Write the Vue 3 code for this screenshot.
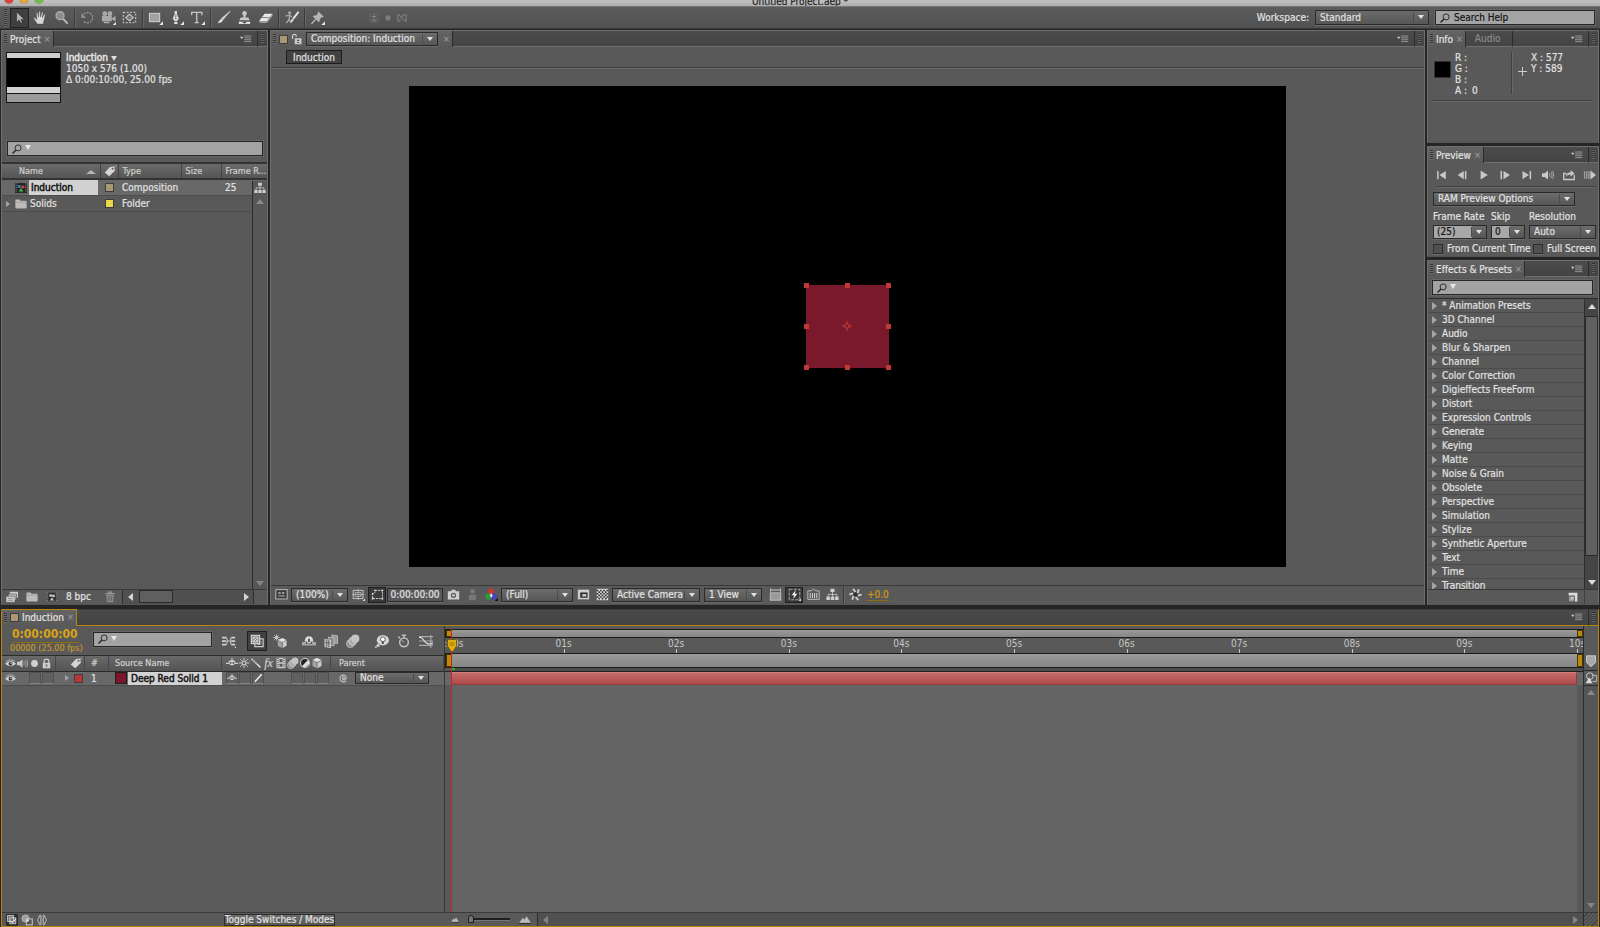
<script setup>
import { h, ref } from 'vue'

const G = '#c9c9c9'
const art = {
  arrow: `<path d="M5 2v11l2.600-2.400L9.300 14l1.700-.8-1.500-3.200H13z" fill="#b5b5b5" stroke="#222" stroke-width=".5"/>`,
  hand: `<path d="M4.600 15 1 9.200c-.5-1.200.8-1.600 1.500-.8l1.700 1.700L3.500 3.600c0-1.200 1.400-1.200 1.600-.1l.8 4 .2-5.400c.1-1.200 1.600-1.200 1.700 0l.2 5.300 1.300-4.700c.4-1.100 1.700-.7 1.500.4l-.8 5 1.700-3.200c.6-.9 1.700-.4 1.400.6L11.500 12 11 15z" fill="#d8d8d8" stroke="#333" stroke-width=".4"/>`,
  zoom: `<circle cx="6.500" cy="6" r="4.200" fill="#8d8d8d" stroke="#aaa" stroke-width="1.500"/><path d="m9.800 9.500 4.700 5" stroke="#bdbdbd" stroke-width="2"/>`,
  rotate: `<path d="M4 4.500A5.500 5.500 0 1 1 4 12" fill="none" stroke="#999" stroke-width="1.300" stroke-dasharray="2.200 1.100"/><path d="M1.500 3.500v4.800h4.800z" fill="#999"/>`,
  camera: `<circle cx="4" cy="4" r="2.600" fill="#aaa"/><circle cx="9.500" cy="4" r="2.600" fill="#aaa"/><path d="M1 6.500h10.500v5.500H1zM12 8.500l3.500-2v5.500L12 10.500zM3 12.500h6V14H3z" fill="#aaa"/><path d="M16 12.500V16h-3.500z" fill="#e0e0e0"/>`,
  panbehind: `<rect x="1.500" y="2.500" width="13" height="11" fill="none" stroke="#bbb" stroke-width="1.400" stroke-dasharray="2 1.600"/><circle cx="8" cy="8" r="3" fill="#777" stroke="#ccc"/><path d="m8 3.500 1.500 2h-3zM8 12.500l1.500-2h-3zM3 8l2-1.500v3zM13 8l-2-1.500v3z" fill="#ccc"/>`,
  rect: `<rect x="1.500" y="3.500" width="11" height="9" fill="#a2a2a2" stroke="#d5d5d5"/><path d="M16 12v4h-4z" fill="#e6e6e6"/>`,
  pen: `<path d="M6 1h2.500v3.500L10.500 9 8.500 12H6L4 9l2-4.500zM5.500 12.800h3.500V15H5.500z" fill="#ddd"/><path d="M7.250 5v5" stroke="#555" stroke-width=".8"/><path d="M16 12v4h-4z" fill="#e6e6e6"/>`,
  type: `<path d="M1.800 5.500v-3h10.900v3M7.200 2.500v11M5 13.500h4.500" fill="none" stroke="#c4c4c4" stroke-width="1.400"/><path d="M16 12v4h-4z" fill="#e6e6e6"/>`,
  brush: `<path d="M14.800 1.500 7.500 10.300 6 9z" fill="#e5e5e5" stroke="#ccc"/><path d="M5.700 9.200 7.500 11c-.8 2.300-3.500 3-6 3 1.700-1 1.700-4 4.200-4.800z" fill="#ddd"/>`,
  stamp: `<path d="M8 1a2.600 2.600 0 0 1 1.300 4.800L9 8h-2l-.3-2.200A2.600 2.600 0 0 1 8 1zM4 8h8l1.500 3h-11z" fill="#c8c8c8"/><path d="M2 12.500h12v2.300H2z" fill="#eee"/><path d="M5 12.500h6l-3 2z" fill="#444"/>`,
  eraser: `<path d="M7 4h8.500l-6 8H1z" fill="#e8e8e8"/><path d="M1 12h8.500v1.700H2.500zM9.500 12l6-8v2l-6 7.700z" fill="#aaa"/><path d="m4.300 8 8.500.2" stroke="#777"/>`,
  roto: `<circle cx="6" cy="3" r="1.700" fill="#aaa"/><path d="M1.500 6.500 6 5.500l2.500 2M6 5.500 5.500 10 2.500 14M5.500 10l2.500 4" fill="none" stroke="#aaa" stroke-width="1.500"/><path d="m15.500 2-5.800 7.500" stroke="#e5e5e5" stroke-width="2"/><path d="m8.800 9 1.600 1.300C9.500 12.200 8 13 6.500 13c1.200-.8 1-3 2.300-4z" fill="#ddd"/>`,
  pin: `<path d="M9 1.500 14.500 7l-1.200 1-1-.3-2 2.300c.3 1.300 0 2.200-.8 3L3 6.800c.8-.8 1.800-1 3-.7l2.300-2-.3-1.300z" fill="#b5b5b5"/><path d="m6 10-4.500 4.800" stroke="#c8c8c8" stroke-width="1.300"/><path d="M16 12v4h-4z" fill="#e6e6e6"/>`,
  axis1: `<rect x="2.500" y="2.500" width="11" height="11" fill="none" stroke="#777" stroke-dasharray="1.500 1"/><path d="M8 3.500v9M5 6h6M4.500 9c0 4 7 4 7 0" fill="none" stroke="#858585" stroke-width="1.300"/>`,
  dot: `<circle cx="8" cy="8" r="3.600" fill="#7c7c7c"/>`,
  axis3: `<path d="M2.500 3v9h3M3 3l10 10M10 4l-4 4M3 13l3-3M8.500 4h5v9" fill="none" stroke="#808080" stroke-width="1.400"/>`,
  search: `<circle cx="9.500" cy="6.500" r="4" fill="none" stroke="#2b2b2b" stroke-width="1.300"/><path d="M6.500 9.500 2 14" stroke="#2b2b2b" stroke-width="1.900"/>`,
  menu: `<path d="M0 5h4.600L2.300 8z" fill="#ccc"/><path d="M5.500 4H15M5.500 6.500H15M5.500 9H15M5.500 11.500H15" stroke="#9c9c9c" stroke-width="1.200"/>`,
  lock: `<path d="M2 8V4.200C2 1 7 1 7 4.200V5" fill="none" stroke="#ccc" stroke-width="1.600"/><rect x="5" y="7" width="9" height="8" fill="#ccc"/><path d="M8 9h3v1.500h-3zM8 12h3v1.200h-3z" fill="#555"/>`,
  tag: `<path d="m1 10 7-7.500L13.500 2l1 5.500L7 15z" fill="#d6d6d6"/><circle cx="11.500" cy="5" r="1.300" fill="#444"/><path d="m11.500 5 4.500-4" stroke="#ccc"/>`,
  comp: `<rect x="0" y="1.500" width="16" height="13" fill="#222"/><path d="M1.500 2v12M14.500 2v12" stroke="#aaa" stroke-width="1.200" stroke-dasharray="1.200 1.200"/><path d="M3.500 4h4v4h-4z" fill="#2b7fb5"/><circle cx="10.500" cy="6.500" r="2.300" fill="#d23a2a"/><path d="m8 8 3.500 4.800H4.500z" fill="#37b24a"/>`,
  folder: `<path d="M.5 3q0-1 1-1H6l1.500 1.500h7q1 0 1 1V13q0 1-1 1h-13q-1 0-1-1z" fill="#bbb"/><path d="M.5 5.500h15" stroke="#8a8a8a" stroke-width=".7"/>`,
  tree: `<path d="M5.500 1h5v4h-5zM.5 10.500h4.300v4.300H.5zM5.900 10.500h4.300v4.300H5.900zM11.200 10.500h4.300v4.300h-4.300z" fill="#d0d0d0"/><path d="M8 5v5.500M2.700 10.500V7.800h10.600v2.700" fill="none" stroke="#d0d0d0"/>`,
  footage: `<path d="M5 1h11v8H5z" fill="#ccc"/><path d="M3 4h11v8H3z" fill="#bbb" stroke="#444" stroke-width=".7"/><path d="M0 7h12v8H0z" fill="#ddd" stroke="#444" stroke-width=".7"/><path d="M2 9.700h8M2 12.300h8" stroke="#777" stroke-width="1.200"/>`,
  newcomp: `<rect x=".5" y="1.500" width="15" height="13" fill="#2c2c2c" stroke="#888" stroke-width=".6"/><path d="M2.300 2.500v11M13.700 2.500v11" stroke="#bbb" stroke-width="1.200" stroke-dasharray="1.200 1.200"/><path d="M4.500 4.500h3.500v3H4.500z" fill="#ccc"/><circle cx="10" cy="6.500" r="1.900" fill="#ccc"/><path d="m8 8.500 2.800 4H5z" fill="#ccc"/>`,
  trash: `<path d="M2 3.500h12M6 3V1.500h4V3" fill="none" stroke="#999" stroke-width="1.400"/><path d="M3 5h10l-.8 10H3.800z" fill="#8e8e8e"/><path d="M5.700 6.500v7M8 6.500v7M10.300 6.500v7" stroke="#555"/>`,
  monitor: `<rect x="1" y="2" width="14" height="11.500" fill="#3c3c3c" stroke="#bbb" stroke-width="1.200"/><path d="M4 5h3v2.500H4zM8.500 5h3v2.500h-3zM4 9h8v1.500H4z" fill="#999"/>`,
  grid: `<rect x="1.500" y="3" width="12" height="10" fill="none" stroke="#bbb" stroke-width="1.300"/><path d="M7.500 1v14M0 8h15M4 5.500h7v5H4z" fill="none" stroke="#bbb"/><path d="M16 13v3h-3z" fill="#ddd"/>`,
  mask: `<path d="M5 3h9v10H2V7c2 0 3-1 3-4z" fill="none" stroke="#ccc" stroke-width="1.200" stroke-dasharray="2.500 1"/><path d="M4 2h2v2H4zM13 2h2v2h-2zM13 12h2v2h-2zM1 12h2v2H1zM1 6h2v2H1z" fill="#ddd"/>`,
  photo: `<path d="M1 4h4l1-2h4l1 2h4v10H1z" fill="#d0d0d0"/><circle cx="8" cy="9" r="3.200" fill="#555"/><circle cx="8" cy="9" r="1.700" fill="#ccc"/>`,
  person: `<circle cx="8" cy="4" r="2.900" fill="#777"/><path d="M3.500 15V9.500q0-1.500 2-1.500h5q2 0 2 1.500V15z" fill="#777"/>`,
  rgb: `<circle cx="7.500" cy="4.700" r="4" fill="#c9342d"/><circle cx="4.500" cy="10.500" r="4" fill="#2f9a3c"/><circle cx="10.700" cy="10.500" r="4" fill="#4a45b8"/><path d="M7.600 6 9.300 9.500l-1.700 2.500-1.600-2.500z" fill="#eee"/><path d="M16 12v4h-4z" fill="#111"/>`,
  roi: `<rect x="1" y="2" width="14" height="12" fill="#ccc"/><rect x="4" y="5.500" width="9" height="6.500" fill="#2c2c2c"/><rect x="6.500" y="7.500" width="5" height="3" fill="#ccc"/>`,
  checker: `<rect x="1" y="1" width="14" height="14" fill="#ddd"/><path d="M1 3h14M1 7h14M1 11h14" stroke="#333" stroke-width="2" stroke-dasharray="2 2"/><path d="M3 5h12M3 9h12M3 13h12" stroke="#333" stroke-width="2" stroke-dasharray="2 2"/>`,
  ratio: `<path d="M2 .5v4M14 .5v4M2 2.500h12" stroke="#ccc" stroke-width="1.200"/><rect x="1.500" y="6" width="13" height="9" fill="#999" stroke="#ccc"/>`,
  fast: `<rect x="1.500" y="1.500" width="13" height="13" fill="none" stroke="#bbb" stroke-dasharray="4 1.500"/><path d="M9.500 2.500 4.500 9h3L6.500 13.500l5-6.500h-3z" fill="#eee"/><path d="M16 13v3h-3z" fill="#ddd"/>`,
  timeline: `<path d="M1 14V3.500h4.500L8 1l2.500 2.500H15V14z" fill="none" stroke="#bbb" stroke-width="1.200"/><path d="M4 6v6.500M6.700 6v6.500M9.300 6v6.500M12 6v6.500" stroke="#ccc" stroke-width="1.300"/>`,
  aperture: `<circle cx="8" cy="8" r="3" fill="#333"/><path d="M8 5 5 1M10.500 6.500 12 1.500M11 9.500l4.500-1.500M8 11l3.500 4M5.500 9.500 4 14.500M5 6.500.5 8" stroke="#ccc" stroke-width="2.300"/>`,
  first: `<path d="M1.500 2.500h2v11h-2zM13 2.500v11L4.500 8z" fill="${G}"/>`,
  back: `<path d="M9 2.500v11L1 8zM10.500 2.500h2v11h-2z" fill="${G}"/>`,
  play: `<path d="M3.500 2v12L13 8z" fill="${G}"/>`,
  fwd: `<path d="M2 2.500h2v11H2zM6 2.500v11L14.500 8z" fill="${G}"/>`,
  last: `<path d="M2 2.500v11L10.500 8zM11.500 2.500h2v11h-2z" fill="${G}"/>`,
  speaker: `<path d="M0 5.500h3.500L8 2v12l-4.500-3.500H0z" fill="${G}"/><path d="M9.800 5.500q1.600 2.500 0 5M12 3.500q3 4.500 0 9M14.200 2.500q3 5.500 0 11" fill="none" stroke="#aaa" stroke-width="1.200"/>`,
  loop: `<path d="M4.500 6H1v8h14V8" fill="none" stroke="${G}" stroke-width="1.800"/><path d="M4 10q0-5.500 6-5.500V1.500L15.500 6 10 10V7.300q-4 0-6 2.700z" fill="${G}"/>`,
  ram: `<path d="M.8 3v10M3.700 3v10M6.600 3v10" stroke="#9c9c9c" stroke-width="1.900"/><path d="M8.500 2v12L16 8z" fill="${G}"/>`,
  newitem: `<path d="M1 1h14v14h-4V5.500H1z" fill="#ddd"/><path d="M1.500 7h8v8h-8z" fill="#999"/><path d="M5 9h3v3M8 9l-4 4" stroke="#eee" fill="none"/>`,
  eye: `<path d="M0 8.500q8-8 16 0-8 7-16 0z" fill="#d6d6d6"/><circle cx="8" cy="8.300" r="2.800" fill="#3b3b3b"/><circle cx="8.800" cy="7.500" r=".9" fill="#eee"/><path d="M1.500 5Q8 .3 14.500 5" fill="none" stroke="#bbb" stroke-width="1.200"/>`,
  solo: `<circle cx="8" cy="8" r="5" fill="#d0d0d0"/>`,
  padlock: `<path d="M4.500 8V5q0-3.300 3.500-3.300T11.500 5v3" fill="none" stroke="#ccc" stroke-width="1.800"/><rect x="2.500" y="7" width="11" height="8" fill="#ccc"/><path d="M7 9.500h2v3H7z" fill="#555"/>`,
  shy: `<path d="M0 8.500h4M12 8.500h4M8 1.500V4" stroke="#ccc" stroke-width="1.700"/><path d="M3.500 8q0-4 4.500-4t4.500 4l-2.500 3H6z" fill="#d0d0d0"/><circle cx="6.200" cy="7.800" r="1.200" fill="#3c3c3c"/><circle cx="9.800" cy="7.800" r="1.200" fill="#3c3c3c"/>`,
  sun: `<circle cx="8" cy="8" r="2.600" fill="none" stroke="#ccc" stroke-width="1.700"/><path d="M8 1v3M8 12v3M1 8h3M12 8h3M3 3l2 2M11 11l2 2M13 3l-2 2M5 11l-2 2" stroke="#ccc" stroke-width="1.300"/>`,
  quality: `<path d="M2 2.500 9 9" stroke="#ccc" stroke-width="2.200" stroke-dasharray="2.400 1"/><path d="m9 9 5 5" stroke="#eee" stroke-width="1.600"/>`,
  slash: `<path d="M3 14 14 2" stroke="#eee" stroke-width="2.500"/>`,
  film: `<rect x="2" y="1" width="12" height="14" fill="#ccc"/><path d="M4 1v14M12 1v14" stroke="#444" stroke-width="1.400" stroke-dasharray="1.500 1.300"/><path d="M6 3h4v4H6zM6 9h4v4H6z" fill="#555"/>`,
  blur: `<circle cx="5" cy="11" r="4.500" fill="#909090" stroke="#ccc" stroke-width=".8"/><circle cx="7.600" cy="8.300" r="4.500" fill="#aaa" stroke="#ddd" stroke-width=".8"/><circle cx="10.600" cy="5.300" r="4.700" fill="#c4c4c4"/>`,
  adjust: `<circle cx="8" cy="8" r="6" fill="#222" stroke="#ccc" stroke-width="1.500"/><path d="M12.200 3.800a6 6 0 0 1-8.400 8.400z" fill="#ddd"/>`,
  cube: `<path d="m8 1 6 3-6 3-6-3z" fill="#e0e0e0"/><path d="m2 5 5.500 2.800V15L2 12z" fill="#a5a5a5"/><path d="m14 5-5.500 2.800V15l5.500-3z" fill="#c8c8c8"/>`,
  pickwhip: `<path d="M8.500 8.500a1.300 1.300 0 1 0-1.600-1.800c-1 2.300 1.600 4 3.500 3 2.800-1.700 1.800-5.700-1.500-6.500C4.500 2.500 2 6 3.200 9.500c1.200 3.200 5 4.500 8.300 3" fill="none" stroke="#ccc" stroke-width="1.500"/>`,
  flow: `<path d="M0 4h5M0 8h5M0 12h5M10.500 4H15M10.500 8H15M10.500 12H15" stroke="#d0d0d0" stroke-width="2"/><path d="M5 4l1.500 4L5 12M10.500 4 9.300 8l1.200 4M6.500 8h3" fill="none" stroke="#bbb" stroke-width="1.200"/><path d="M16 14v2h-2z" fill="#ddd"/>`,
  live: `<rect x="1.500" y="1.500" width="9.500" height="9.500" fill="#777" stroke="#ddd" stroke-width="1.200"/><path d="M3.500 3.500h5.500V9H3.500zM3.500 3.500 9 9M9 3.500 3.500 9" fill="none" stroke="#e5e5e5"/><path d="M5.500 11v3.500h9.500V5.500H11" fill="none" stroke="#ccc" stroke-width="1.400"/><path d="M8 11v1h4.500V8H11" fill="none" stroke="#aaa"/>`,
  draft: `<path d="M4 .5v7M.5 4h7M1.500 1.500l5 5M6.500 1.500l-5 5" stroke="#ccc"/><path d="m10.500 4.500 5 2.300-5 2.500-5-2.500z" fill="#e0e0e0"/><path d="m5.500 7.500 4.500 2.300V16l-4.500-2.500z" fill="#a5a5a5"/><path d="m15.500 7.500-4.500 2.300V16l4.500-2.500z" fill="#ccc"/>`,
  hideshy: `<path d="M0 9h4.500v4H0zM11.500 9H16v4h-4.500zM4.500 11.500h7V13h-7z" fill="#a8a8a8"/><path d="M3 8.500Q3.500 2.500 8 2.500t5 6H10v2H6v-2z" fill="#ddd"/><path d="M7 5.500h2V9H7z" fill="#444"/>`,
  frames: `<path d="M9 1 15.500 2v9L9 10z" fill="#999" stroke="#ccc" stroke-width=".8"/><path d="m5 3.500 6.500 1v9L5 12.500z" fill="#888" stroke="#ccc" stroke-width=".8"/><path d="M1 6l6.500 1v8.500L1 14.500z" fill="#aaa" stroke="#ddd" stroke-width=".8"/><path d="M3 6v9M5.200 6v9M1 10h6.500" stroke="#555" stroke-width=".7"/>`,
  bulb: `<ellipse cx="9" cy="7" rx="7" ry="6" fill="#d5d5d5"/><circle cx="3.500" cy="13" r="1.900" fill="#ccc"/><circle cx="1" cy="15" r="1" fill="#ccc"/><circle cx="9" cy="6" r="2.700" fill="#fff" stroke="#444"/><path d="M8 9h2v2.500H8z" fill="#444"/>`,
  watch: `<circle cx="8" cy="9.500" r="5" fill="none" stroke="#bdbdbd" stroke-width="1.800"/><path d="M8 4.500V1.500M5.500 1.500h5M3.500 4.800 1.500 3" stroke="#bdbdbd" stroke-width="1.600"/><path d="M8 9.500 5.500 7" stroke="#ccc"/>`,
  graph: `<path d="M0 3h16M0 8h16M0 13h16M13.500 1v15" stroke="#aaa" stroke-width="1.200"/><path d="M0 4q3-1 5 2.500T10 11t6-1" fill="none" stroke="#ddd" stroke-width="1.400"/>`,
  layers: `<rect x="0" y="0" width="16" height="16" fill="#2e2e2e"/><path d="M2 2h8v8H2zM5 5h8v8H5z" fill="#777" stroke="#ddd"/><path d="m6.500 9 2 2.500 5-5" fill="none" stroke="#eee" stroke-width="1.300"/>`,
  modes: `<circle cx="6" cy="6" r="4.700" fill="#999" stroke="#ccc"/><rect x="7" y="6.500" width="8" height="8" fill="#555" stroke="#ccc" stroke-width="1.300"/><path d="M7 10.500V7h4q0 3.500-4 3.500z" fill="#ddd"/>`,
  braces: `<path d="M6.500 1.500Q4 1.500 4 4t-2.500 4Q4 9.500 4 12t2.500 2.500M9.500 1.500q2.500 0 2.500 2.500t2.500 4q-2.500 1.500-2.500 4t-2.500 2.500M6.500 2v12M9.500 2v12" fill="none" stroke="#c5c5c5" stroke-width="1.300"/>`,
  hill: `<path d="M0 12 5 5l2 2.500L10 3l6 9z" fill="#bbb"/><path d="M0 12.500h16" stroke="#222" stroke-width="1.200"/>`,
  marker: `<path d="M2 1h12v9l-6 5.500L2 10z" fill="#a8a8a8" stroke="#ddd"/>`,
  button3: `<circle cx="6.500" cy="5.500" r="4.500" fill="none" stroke="#ccc" stroke-width="1.300"/><path d="M9 4.500h6.500v8H10" fill="none" stroke="#bbb" stroke-width="1.300"/><path d="m1 15 4.500-8 4.500 8z" fill="#d8d8d8"/>`,
  anchor: `<circle cx="8" cy="8" r="3.500" fill="none" stroke="#c23b35" stroke-width="1.700"/><path d="M8 0v4.500M8 11.500V16M0 8h4.500M11.500 8H16" stroke="#c23b35" stroke-width="1.600"/>`,
}
const Icon = (props) =>
  h('svg', { class: 'ic', viewBox: '0 0 16 16', 'aria-hidden': 'true', innerHTML: art[props.name] })
Icon.props = ['name']

const toolGroups = [
  ['arrow', 'hand', 'zoom'],
  ['rotate', 'camera', 'panbehind'],
  ['rect', 'pen', 'type'],
  ['brush', 'stamp', 'eraser'],
  ['roto'],
  ['pin'],
]
const axes = ['axis1', 'dot', 'axis3']
const transport = ['first', 'back', 'play', 'fwd', 'last', 'speaker', 'loop', 'ram']
const effects = [
  '* Animation Presets', '3D Channel', 'Audio', 'Blur & Sharpen', 'Channel', 'Color Correction',
  'Digieffects FreeForm', 'Distort', 'Expression Controls', 'Generate', 'Keying', 'Matte',
  'Noise & Grain', 'Obsolete', 'Perspective', 'Simulation', 'Stylize', 'Synthetic Aperture',
  'Text', 'Time', 'Transition',
]
const ticks = ['0:00s', '01s', '02s', '03s', '04s', '05s', '06s', '07s', '08s', '09s', '10s']
const handles = ['nw', 'n', 'ne', 'w', 'e', 'sw', 's', 'se']
const fromCurrent = ref(false)
const fullScreen = ref(false)
const zoomLevel = ref(0)
</script>

<template>
  <div class="app">
    <header class="titlebar">
      <i class="light red"></i><i class="light amber"></i><i class="light green"></i>
      <h1>Untitled Project.aep *</h1>
    </header>

    <nav class="toolbar" aria-label="Tools">
      <span class="grip"></span>
      <template v-for="(group, g) in toolGroups" :key="g">
        <span v-if="g" class="tsep"></span>
        <button v-for="t in group" :key="t" class="tool" :class="{ on: t === 'arrow' }" :aria-label="t"><Icon :name="t" /></button>
      </template>
      <span class="axes"><Icon v-for="a in axes" :key="a" :name="a" /></span>
      <label class="wslabel" for="workspace">Workspace:</label>
      <span class="sel ws"><select id="workspace"><option>Standard</option></select></span>
      <span class="field help"><Icon name="search" /><input type="text" value="Search Help" aria-label="Search Help" /></span>
    </nav>

    <main class="upper">
      <section class="panel project">
        <div class="tabs">
          <div class="tab"><span class="grip"></span>Project<b class="x">×</b></div>
          <div class="tabfill"></div>
          <button class="pmenu" aria-label="Panel menu"><Icon name="menu" /></button><span class="endgrip"></span>
        </div>
        <div class="summary">
          <div class="thumb"></div>
          <div class="meta"><strong>Induction <i class="dn"></i></strong><span>1050 x 576 (1.00)</span><span>Δ 0:00:10:00, 25.00 fps</span></div>
        </div>
        <div class="field psearch"><Icon name="search" /><i class="dn"></i><input type="text" aria-label="Search project" /></div>
        <div class="listing">
          <table>
            <colgroup><col class="c1" /><col class="c2" /><col class="c3" /><col class="c4" /><col /></colgroup>
            <thead><tr><th class="nm">Name<i class="up"></i></th><th class="ctr"><Icon name="tag" /></th><th>Type</th><th>Size</th><th>Frame R...</th></tr></thead>
            <tbody>
              <tr class="picked">
                <td><div class="item"><i class="tw"></i><Icon name="comp" /><strong>Induction</strong></div></td>
                <td class="ctr"><i class="sw tan"></i></td><td>Composition</td><td></td><td>25</td>
              </tr>
              <tr>
                <td><div class="item"><i class="tw rt"></i><Icon name="folder" /><span>Solids</span></div></td>
                <td class="ctr"><i class="sw yellow"></i></td><td>Folder</td><td></td><td></td>
              </tr>
            </tbody>
          </table>
          <div class="vscroll pv"><Icon name="tree" /><i class="up"></i><span class="grow"></span><i class="dn dim"></i></div>
        </div>
        <footer class="pfoot">
          <button aria-label="Interpret footage"><Icon name="footage" /></button>
          <button aria-label="New folder"><Icon name="folder" /></button>
          <button aria-label="New composition"><Icon name="newcomp" /></button>
          <button class="bpc">8 bpc</button>
          <button aria-label="Delete"><Icon name="trash" /></button>
          <div class="hscroll"><i class="lf"></i><span class="thumbx"></span><i class="rt2"></i></div>
          <span class="corner"></span>
        </footer>
      </section>

      <section class="panel compp">
        <div class="tabs">
          <div class="tab ctab">
            <span class="grip"></span><i class="sw tan"></i><Icon name="lock" />
            <span class="sel csel"><select aria-label="Composition"><option>Composition: Induction</option></select></span><b class="x">×</b>
          </div>
          <div class="tabfill"></div>
          <button class="pmenu" aria-label="Panel menu"><Icon name="menu" /></button><span class="endgrip"></span>
        </div>
        <div class="crumbs"><button>Induction</button></div>
        <div class="stage">
          <div class="frame">
            <div class="solid">
              <i v-for="p in handles" :key="p" class="hd" :class="'at-' + p"></i>
              <Icon name="anchor" />
            </div>
          </div>
        </div>
        <footer class="cfoot">
          <button class="b" aria-label="Always preview"><Icon name="monitor" /></button>
          <span class="sel s1"><select aria-label="Magnification"><option>(100%)</option></select></span>
          <button class="b" aria-label="Grid"><Icon name="grid" /></button>
          <button class="b on" aria-label="Mask"><Icon name="mask" /></button>
          <button class="tc">0:00:00:00</button>
          <button class="b" aria-label="Snapshot"><Icon name="photo" /></button>
          <button class="b" aria-label="Show snapshot"><Icon name="person" /></button>
          <button class="b" aria-label="Channels"><Icon name="rgb" /></button>
          <span class="sel s2"><select aria-label="Resolution"><option>(Full)</option></select></span>
          <button class="b" aria-label="Region of interest"><Icon name="roi" /></button>
          <button class="b" aria-label="Transparency grid"><Icon name="checker" /></button>
          <span class="sel s3"><select aria-label="Camera"><option>Active Camera</option></select></span>
          <span class="sel s4"><select aria-label="Views"><option>1 View</option></select></span>
          <button class="b" aria-label="Pixel aspect"><Icon name="ratio" /></button>
          <button class="b on" aria-label="Fast previews"><Icon name="fast" /></button>
          <button class="b" aria-label="Timeline"><Icon name="timeline" /></button>
          <button class="b" aria-label="Flowchart"><Icon name="tree" /></button>
          <span class="tsep thin"></span>
          <button class="b" aria-label="Reset exposure"><Icon name="aperture" /></button>
          <a href="#exposure" class="hot">+0.0</a>
        </footer>
      </section>

      <aside class="side">
        <section class="panel info">
          <div class="tabs">
            <div class="tab"><span class="grip"></span>Info<b class="x">×</b></div>
            <div class="tab off">Audio</div>
            <div class="tabfill"></div>
            <button class="pmenu" aria-label="Panel menu"><Icon name="menu" /></button><span class="endgrip"></span>
          </div>
          <div class="readout">
            <i class="black"></i>
            <dl><dt>R :</dt><dd></dd><dt>G :</dt><dd></dd><dt>B :</dt><dd></dd><dt>A :</dt><dd>0</dd></dl>
            <i class="vline"></i><i class="plus"></i>
            <div class="xy"><span>X : 577</span><span>Y : 589</span></div>
          </div>
        </section>

        <section class="panel preview">
          <div class="tabs">
            <div class="tab"><span class="grip"></span>Preview<b class="x">×</b></div>
            <div class="tabfill"></div>
            <button class="pmenu" aria-label="Panel menu"><Icon name="menu" /></button><span class="endgrip"></span>
          </div>
          <div class="transport"><button v-for="t in transport" :key="t" :aria-label="t"><Icon :name="t" /></button></div>
          <div class="opts">
            <span class="sel ram"><select aria-label="Preview options"><option>RAM Preview Options</option></select></span>
            <div class="trio">
              <label for="fr">Frame Rate</label><label for="sk">Skip</label><label for="rs">Resolution</label>
              <span class="sel edit"><select id="fr"><option>(25)</option></select></span>
              <span class="sel edit"><select id="sk"><option>0</option></select></span>
              <span class="sel"><select id="rs"><option>Auto</option></select></span>
            </div>
            <div class="checks">
              <label><input v-model="fromCurrent" type="checkbox" />From Current Time</label>
              <label><input v-model="fullScreen" type="checkbox" />Full Screen</label>
            </div>
          </div>
        </section>

        <section class="panel effects">
          <div class="tabs">
            <div class="tab"><span class="grip"></span>Effects &amp; Presets<b class="x">×</b></div>
            <div class="tabfill"></div>
            <button class="pmenu" aria-label="Panel menu"><Icon name="menu" /></button><span class="endgrip"></span>
          </div>
          <div class="field esearch"><Icon name="search" /><i class="dn"></i><input type="text" aria-label="Search effects" /></div>
          <div class="fxwrap">
            <ul><li v-for="e in effects" :key="e"><i class="rt"></i>{{ e }}</li></ul>
            <div class="vscroll ev"><i class="up lit"></i><span class="knob"></span><i class="dn"></i></div>
          </div>
          <footer class="efoot"><button aria-label="New preset"><Icon name="newitem" /></button><span></span></footer>
        </section>
      </aside>
    </main>

    <section class="timeline">
      <div class="tltabs">
        <div class="tltab"><span class="grip"></span><i class="sw tan"></i>Induction<b class="x">×</b></div>
        <div class="tlfill"></div>
        <button class="pmenu" aria-label="Panel menu"><Icon name="menu" /></button><span class="endgrip"></span>
      </div>
      <div class="tlbody">
        <div class="left">
          <div class="controls">
            <div class="time"><a href="#time">0:00:00:00</a><span>00000 (25.00 fps)</span></div>
            <div class="field tsearch"><Icon name="search" /><i class="dn"></i><input type="text" aria-label="Search layers" /></div>
            <div class="sws">
              <div class="trip">
                <button aria-label="Flowchart"><Icon name="flow" /></button>
                <button class="on" aria-label="Live update"><Icon name="live" /></button>
                <button aria-label="Draft 3D"><Icon name="draft" /></button>
              </div>
              <div class="trip">
                <button aria-label="Hide shy layers"><Icon name="hideshy" /></button>
                <button aria-label="Frame blending"><Icon name="frames" /></button>
                <button aria-label="Motion blur"><Icon name="blur" /></button>
              </div>
              <div class="trip">
                <button aria-label="Brainstorm"><Icon name="bulb" /></button>
                <button aria-label="Auto keyframe"><Icon name="watch" /></button>
                <button aria-label="Graph editor"><Icon name="graph" /></button>
              </div>
            </div>
          </div>
          <div class="cols lhead">
            <span class="av"><Icon name="eye" /><Icon name="speaker" /><Icon name="solo" /><Icon name="padlock" /></span>
            <span class="lab"><Icon name="tag" /></span><span class="num">#</span>
            <span class="src">Source Name</span>
            <span class="swi"><Icon name="shy" /><Icon name="sun" /><Icon name="quality" /><em>fx</em><Icon name="film" /><Icon name="blur" /><Icon name="adjust" /><Icon name="cube" /></span>
            <span class="par">Parent</span>
          </div>
          <div class="cols lrow">
            <span class="av"><Icon name="eye" /><i class="gap"></i><i class="box"></i><i class="box"></i></span>
            <span class="lab"><i class="rt"></i><i class="sw rose"></i></span><span class="num">1</span>
            <span class="src"><i class="sw wine"></i><strong>Deep Red Solid 1</strong></span>
            <span class="swi"><i class="box"><Icon name="shy" /></i><i class="box"></i><i class="box"><Icon name="slash" /></i><i class="gap"></i><i class="gap"></i><i class="box"></i><i class="box"></i><i class="box"></i></span>
            <span class="par"><Icon name="pickwhip" /><span class="sel psel"><select aria-label="Parent"><option>None</option></select></span></span>
          </div>
          <div class="lfill"></div>
        </div>

        <div class="right">
          <div class="navbar"><i></i><span></span><i></i></div>
          <div class="ruler">
            <div v-for="(t, i) in ticks" :key="t" class="tick" :style="{ left: i * 10 + '%' }"><span>{{ t }}</span></div>
          </div>
          <div class="workarea"><i></i><span></span><i></i></div>
          <div class="cache"><i></i></div>
          <div class="layerbar"><span></span></div>
          <div class="tracks"></div>
          <div class="playhead"><svg viewBox="0 0 10 14"><path d="M.5.5h9V7L6 12.500H4L.5 7z" fill="#e0ac12" stroke="#5c4700" stroke-width=".7" /><path d="M2.500 4h5M2.500 6h5" stroke="#8a6a00" stroke-width=".8" /></svg></div>
        </div>

        <div class="gutter">
          <div class="g1"><Icon name="marker" /></div>
          <div class="g2"><Icon name="button3" /></div>
          <div class="vscroll tv"><i class="up"></i><span class="grow"></span><i class="dn dim"></i></div>
        </div>
      </div>
      <footer class="tlfoot">
        <div class="fleft">
          <button aria-label="Layer switches"><Icon name="layers" /></button>
          <button aria-label="Transfer modes"><Icon name="modes" /></button>
          <button aria-label="In and out"><Icon name="braces" /></button>
          <button class="toggle">Toggle Switches / Modes</button>
        </div>
        <div class="zoomer"><Icon name="hill" class="small" /><input v-model="zoomLevel" type="range" aria-label="Zoom" /><Icon name="hill" /></div>
        <div class="tlh"><i class="lf"></i><span class="grow"></span><i class="rt2"></i></div>
        <span class="resize"></span>
      </footer>
    </section>
  </div>
</template>

<style>
html, body { margin: 0; height: 100%; background: #232323; }
#app { height: 100%; }
</style>

<style scoped>
.app { height: 100%; display: grid; grid-template-rows: 7px 22px minmax(0, 574fr) minmax(0, 318fr); background: #252525; color: #e2e2e2; font: 10px/11px "DejaVu Sans Condensed", "DejaVu Sans", sans-serif; -webkit-text-stroke: 0.2px currentColor; overflow: hidden; }
.app * { box-sizing: border-box; }
button, input, select { font: inherit; color: inherit; margin: 0; padding: 0; border: 0; background: none; border-radius: 0; outline: none; -webkit-text-stroke: inherit; }
button { display: flex; align-items: center; justify-content: center; }
input[type='text'] { flex: 1; min-width: 0; height: 100%; }
ul, dl, dd, h1 { margin: 0; padding: 0; list-style: none; }
.ic { width: 12px; height: 12px; flex: none; display: block; overflow: visible; }
.grow { flex: 1; }
strong { font-weight: 400; -webkit-text-stroke: 0.5px currentColor; }

/* title bar */
.titlebar { position: relative; background: linear-gradient(#c2c2c2, #adadad); border-bottom: 1px solid #777; overflow: hidden; }
.titlebar h1 { position: absolute; left: 0; right: 0; bottom: -1px; text-align: center; font-size: 10px; line-height: 11px; font-weight: 400; color: #222; }
.light { position: absolute; bottom: 2px; width: 10px; height: 12px; border-radius: 50%; border: 1px solid #8886; }
.red { left: 4px; background: #e23f3f; } .amber { left: 19px; background: #eda63a; } .green { left: 34px; background: #74bd4a; }

/* toolbar */
.toolbar { display: flex; align-items: center; background: linear-gradient(#5c5c5c, #515151); border-bottom: 1px solid #3a3a3a; padding-right: 5px; }
.grip { width: 3px; height: 10px; flex: none; background: repeating-linear-gradient(#353535 0 1px, #6c6c6c 1px 2px); }
.toolbar > .grip { margin: 0 2px 0 4px; height: 18px; }
.tool { width: 21px; height: 20px; }
.tool .ic { width: 15px; height: 15px; }
.tool.on { width: 19px; margin: 0 1px; background: #3f3f3f; border: 1px solid #222; }
.tsep { width: 5px; height: 18px; flex: none; background: linear-gradient(90deg, transparent 2px, #383838 2px 3px, #686868 3px 4px, transparent 4px); }
.axes { display: flex; gap: 2px; margin-left: 40px; }
.wslabel { margin-left: auto; margin-right: 6px; }

/* selects */
.sel { position: relative; display: inline-flex; height: 14px; flex: none; border: 1px solid #2a2a2a; background: linear-gradient(#6c6c6c, #565656); box-shadow: 0 1px 0 #6b6b6b; }
.sel select { width: 100%; height: 100%; appearance: none; padding: 0 14px 0 4px; line-height: 12px; }
.sel::before { content: ''; position: absolute; right: 14px; top: 1px; bottom: 1px; border-left: 1px solid #4b4b4b; }
.sel::after { content: ''; position: absolute; right: 4px; top: 4px; border: 3px solid transparent; border-top: 4px solid #e2e2e2; border-bottom: 0; pointer-events: none; }
.ws { width: 114px; height: 15px; margin-right: 6px; }
.sel option { color: #111; }

/* text fields */
.field { display: flex; align-items: center; height: 15px; padding: 0 3px; background: #a3a3a3; border: 1px solid #262626; box-shadow: 0 0 0 1px #656565; }
.field .dn { margin: -2px 4px 0 2px; border-top-color: #e8e8e8; }
.help { width: 160px; color: #151515; }
.help input { padding-left: 3px; }

/* arrows */
.dn, .up, .lf, .rt, .rt2 { display: inline-block; width: 0; height: 0; flex: none; border: 4px solid transparent; }
.dn { border: 3px solid transparent; border-top: 5px solid #dedede; border-bottom: 0; }
.up { border-bottom: 5px solid #8a8a8a; border-top: 0; }
.lf { border-right: 5px solid #d5d5d5; border-left: 0; }
.rt { border-left: 4px solid #a5a5a5; border-right: 0; border-top-width: 3px; border-bottom-width: 3px; }
.rt2 { border-left: 5px solid #d5d5d5; border-right: 0; }
.dim { border-width: 5px 4px 0; border-top-color: #858585; }

/* panels */
.upper { display: grid; grid-template-columns: 267px minmax(0, 1fr) 172px; gap: 2px; padding: 1px 1px 2px; min-height: 0; }
.panel { display: flex; flex-direction: column; min-width: 0; min-height: 0; background: #595959; border: 1px solid #6e6e6e; border-bottom-color: #555; overflow: hidden; }
.tabs { display: flex; flex: none; height: 16px; background: linear-gradient(#4b4b4b, #434343); }
.tab { display: flex; align-items: center; gap: 3px; padding: 0 2px; background: linear-gradient(#636363, #595959); border-right: 1px solid #2b2b2b; }
.tab.off { background: none; color: #8b8b8b; padding: 0 12px 0 9px; border-bottom: 1px solid #707070; }
.tabfill { flex: 1; border-bottom: 1px solid #707070; }
.x { font-weight: 400; font-size: 9px; color: #999; }
.pmenu { width: 22px; border-bottom: 1px solid #707070; }
.endgrip { width: 10px; border-left: 1px solid #2b2b2b; border-bottom: 1px solid #707070; background: repeating-linear-gradient(#333 0 1px, #666 1px 2px) 3px 2px / 3px 10px no-repeat; }
.sw { display: inline-block; width: 9px; height: 9px; flex: none; border: 1px solid #3d3d3d; }
.tan { background: #aa9875; } .yellow { background: #e8d94a; } .rose { background: #b83436; } .wine { background: #7a162c; }

.summary { display: flex; gap: 5px; padding: 5px 4px; height: 91px; flex: none; }
.thumb { width: 55px; height: 51px; flex: none; border: 1px solid #141414; background: linear-gradient(#cfcfcf 0 5px, #000 5px 34px, #d2d2d2 34px 40px, #141414 40px 41px, #9b9b9b 41px); }
.meta { display: flex; flex-direction: column; }
.psearch { margin: 3px 4px 6px 5px; flex: none; }
.listing { flex: 1; min-height: 0; display: flex; position: relative; border-top: 2px solid #333; }
table { width: 100%; table-layout: fixed; border-collapse: collapse; align-self: flex-start; }
.c1 { width: 98px; } .c2 { width: 18px; } .c3 { width: 63px; } .c4 { width: 40px; }
th { height: 15px; padding: 0 4px; text-align: left; font-size: 9px; font-weight: 400; color: #d0d0d0; background: linear-gradient(#6a6a6a, #555); border-left: 1px solid #424242; border-bottom: 2px solid #333; white-space: nowrap; }
th.nm { padding-left: 17px; border: 0; border-bottom: 2px solid #333; }
th .up { float: right; margin: 4px 0 0; border-width: 0 5px 4px; border-bottom-color: #b5b5b5; }
td { height: 16px; padding: 0 4px; border-bottom: 1px solid #4c4c4c; white-space: nowrap; }
.ctr { padding: 0 3px; text-align: center; }
td .sw { display: block; margin: 0 auto; }
td:first-child { padding: 0; }
.picked td { background: #686868; }
.item { display: flex; align-items: center; height: 15px; padding-left: 4px; gap: 3px; }
.item .tw { width: 6px; }
.item .tw.rt { width: 0; margin-right: 2px; }
.item strong { flex: 1; height: 15px; line-height: 15px; margin-right: 2px; margin-left: -1px; padding-left: 2px; background: #d2d2d2; color: #171717; }
.vscroll { width: 15px; flex: none; display: flex; flex-direction: column; align-items: center; background: #565656; border-left: 1px solid #2d2d2d; }
.pv { position: absolute; right: 0; top: 17px; bottom: 0; gap: 5px; padding: 1px 0 3px; background: #575757; }
.pfoot, .cfoot, .efoot { display: flex; align-items: center; flex: none; height: 18px; border-top: 1px solid #383838; }
.pfoot { height: 15px; padding-left: 4px; gap: 8px; }
.pfoot .bpc { margin: 0 5px 0 0; }
.hscroll { display: flex; align-items: center; flex: 1; height: 14px; margin-left: -2px; padding: 0 4px 0 5px; background: #505050; border-left: 1px solid #2d2d2d; }
.thumbx { width: 34px; height: 13px; margin-left: 6px; margin-right: auto; border: 1px solid #2a2a2a; background: #5f5f5f; }
.corner { width: 14px; height: 14px; margin-left: -8px; border-left: 1px solid #2d2d2d; }

/* composition */
.ctab { gap: 3px; }
.ctab .x { margin-left: 2px; }
.csel { width: 132px; }
.crumbs { height: 21px; flex: none; padding: 3px 15px; border-bottom: 1px solid #404040; box-shadow: 0 1px 0 #6b6b6b; }
.crumbs button { height: 14px; padding: 0 6px; background: #424242; border: 1px solid #1d1d1d; }
.stage { flex: 1; min-height: 0; display: grid; place-items: center; }
.frame { width: 76%; aspect-ratio: 875 / 480; background: #000; display: grid; place-items: center; }
.solid { position: relative; width: 9.5%; aspect-ratio: 1; background: #7a182c; display: grid; place-items: center; }
.solid .ic { width: 10px; height: 10px; }
.hd { position: absolute; width: 5px; height: 5px; margin: -2px; background: #bd3a36; }
.at-nw, .at-n, .at-ne { top: 0; } .at-sw, .at-s, .at-se { bottom: 0; } .at-w, .at-e { top: 50%; }
.at-nw, .at-w, .at-sw { left: 0; } .at-ne, .at-e, .at-se { right: 0; } .at-n, .at-s { left: 50%; }
.cfoot { height: 19px; padding: 0 1px; gap: 1px; }
.b { width: 18px; height: 16px; }
.b .ic { width: 13px; height: 13px; }
.b.on { background: #3a3a3a; border: 1px solid #1f1f1f; }
.s1 { width: 57px; } .s2 { width: 72px; } .s3 { width: 88px; margin-right: 3px; } .s4 { width: 58px; margin-right: 3px; }
.thin { margin: 0 -1px; }
.tc { width: 56px; height: 14px; border: 1px solid #2a2a2a; box-shadow: 0 1px 0 #6b6b6b; }
.hot { color: #d29a14; text-decoration: none; border-bottom: 1px solid #8d6c18; margin-left: 2px; }

/* right column */
.side { display: grid; grid-template-rows: 113px 111px minmax(0, 1fr); gap: 3px; min-height: 0; min-width: 0; }
.readout { display: flex; margin: 0 6px 0 4px; padding: 5px 0 4px; height: 54px; border-bottom: 1px solid #414141; box-shadow: 0 1px 0 #6a6a6a; }
.black { width: 17px; height: 17px; margin: 9px 4px 0 2px; background: #000; border: 1px solid #333; }
.readout dl { display: grid; grid-template-columns: 17px 39px; grid-auto-rows: 11px; }
.vline { width: 2px; height: 42px; background: linear-gradient(90deg, #404040 1px, #696969 1px); }
.plus { width: 9px; height: 9px; margin: 15px 4px 0 5px; background: linear-gradient(#ccc, #ccc) 4px 0 / 1px 9px no-repeat, linear-gradient(#ccc, #ccc) 0 4px / 9px 1px no-repeat; }
.xy { display: flex; flex-direction: column; }
.transport { display: flex; align-items: center; justify-content: space-between; height: 24px; margin: 0 2px 0 8px; border-bottom: 1px solid #414141; box-shadow: 0 1px 0 #6a6a6a; }
.opts { padding: 5px 2px 0 5px; }
.opts .ram { display: flex; }
.ram { width: 142px; }
.trio { display: grid; grid-template-columns: 54px 34px 1fr; column-gap: 4px; row-gap: 3px; margin-top: 5px; white-space: nowrap; }
.trio .edit select { background: linear-gradient(90deg, #a8a8a8, #a8a8a8) 0 0 / calc(100% - 14px) 100% no-repeat; color: #151515; padding-left: 3px; padding-right: 2px; }
.checks { display: flex; justify-content: space-between; margin-top: 4px; white-space: nowrap; }
.checks label { display: flex; align-items: center; gap: 4px; }
.checks input { appearance: none; width: 10px; height: 10px; background: #505050; border: 1px solid #2e2e2e; box-shadow: 0 1px 0 #6d6d6d; }
.checks input:checked { background: #bbb; }
.esearch { margin: 3px 5px 3px 4px; flex: none; }
.fxwrap { flex: 1; min-height: 0; display: flex; border-top: 1px solid #2b2b2b; overflow: hidden; }
.fxwrap ul { flex: 1; overflow: hidden; }
.fxwrap li { display: flex; align-items: center; gap: 5px; height: 14px; padding-left: 4px; border-bottom: 1px solid #4b4b4b; line-height: 13px; }
.fxwrap li .rt { border-width: 4px 0 4px 5px; }
.ev { width: 14px; background: #454545; padding: 5px 0 4px; }
.ev .dn { border-width: 5px 4px 0; }
.lit { border-bottom-color: #dcdcdc; }
.knob { width: 13px; flex: 1; margin: 7px 0 24px; background: #606060; border: 1px solid #292929; }
.efoot { height: 15px; justify-content: flex-end; }
.efoot .ic { width: 10px; height: 10px; }
.efoot span { width: 14px; height: 14px; margin-left: 6px; border-left: 1px solid #404040; }

/* timeline */
.timeline { display: flex; flex-direction: column; min-height: 0; margin: 2px 1px 0; background: #595959; border: 1px solid #b8860e; border-top-color: #3c3c3c; }
.tltabs { display: flex; flex: none; height: 16px; background: linear-gradient(#4b4b4b, #434343); }
.tltab { display: flex; align-items: center; gap: 3px; padding: 0 2px; margin-top: -1px; background: linear-gradient(#646464, #595959); border-top: 1px solid #b8860e; border-right: 1px solid #b8860e; }
.tlfill { flex: 1; }
.tlfill, .tltabs .pmenu, .tltabs .endgrip { border-bottom: 1px solid #b8860e; }
.tlbody { flex: 1; min-height: 0; display: grid; grid-template-columns: 443px minmax(0, 1fr) 15px; }
.left, .right, .gutter { display: flex; flex-direction: column; min-height: 0; min-width: 0; }
.left { border-right: 1px solid #363636; }
.controls { display: flex; height: 30px; flex: none; padding: 1px 0 0 8px; border-bottom: 1px solid #2b2b2b; }
.time { width: 76px; color: #d9a514; }
.time a { display: block; width: 67px; margin-left: 2px; color: inherit; text-decoration: none; font-size: 12px; font-weight: 700; line-height: 15px; border-bottom: 1px solid #8d6c18; -webkit-text-stroke: 0; white-space: nowrap; }
.time span { display: block; font-size: 9px; line-height: 10px; white-space: nowrap; color: #c0952a; }
.tsearch { width: 119px; margin: 5px 9px 0 7px; }
.sws { display: flex; flex: 1; align-items: center; justify-content: space-between; padding-right: 10px; }
.sws .ic { width: 16px; height: 14px; }
.trip { display: flex; align-items: center; gap: 6px; }
.trip:first-child { gap: 7px; }
.trip .on { width: 20px; height: 20px; background: #404040; border: 1px solid #1e1e1e; margin-left: 3px; margin-right: -2px; }
.cols { display: grid; grid-template-columns: 54px 29px 24px 113px 109px 1fr; align-items: center; flex: none; }
.cols > span { display: flex; align-items: center; }
.lhead { height: 16px; font-size: 9px; color: #d0d0d0; background: linear-gradient(#696969, #545454); border-bottom: 1px solid #2b2b2b; }
.lhead > span { height: 14px; border-right: 1px solid #474747; }
.lrow { height: 14px; background: #686868; border-bottom: 1px solid #4c4c4c; }
.cols .av { padding-left: 3px; gap: 1px; }
.av .ic, .av .gap { width: 11px; } .av .ic { height: 11px; }
.box { width: 12px; height: 12px; flex: none; display: flex; align-items: center; justify-content: center; background: #606060; border: 1px solid #505050; border-bottom-color: #828282; }
.av .box { width: 12px; }
.cols .lab { justify-content: flex-end; padding-right: 2px; gap: 5px; }
.cols .num { padding-left: 6px; }
.cols .src { padding-left: 6px; gap: 1px; }
.lrow .src .wine { width: 12px; height: 12px; border-color: #1e1e1e; }
.lrow .src { height: 13px; }
.lrow strong { flex: 1; height: 13px; line-height: 13px; padding-left: 3px; background: #d2d2d2; color: #171717; white-space: nowrap; }
.cols .swi { gap: 1px; padding-left: 4px; }
.cols .swi .gap { width: 12px; }
.swi em { width: 13px; text-align: center; font: italic 12px/11px "Liberation Serif", serif; }
.lhead .swi .ic { width: 12px; height: 12px; }
.cols.lhead .swi { gap: 0; }
.lrow .swi .ic { width: 10px; height: 10px; }
.cols .par { padding-left: 8px; gap: 6px; }
.lrow .par { margin-left: -1px; }
.par .ic { width: 11px; height: 11px; }
.psel { width: 74px; height: 12px; }
.psel select { line-height: 10px; }
.psel::after { top: 3px; }
.lfill { flex: 1; background: #5b5b5b; }

.right { position: relative; overflow: hidden; }
.navbar, .workarea { display: flex; flex: none; border: 1px solid #1d1d1d; border-right: 0; }
.navbar { height: 9px; margin-top: 3px; }
.navbar span, .workarea span { flex: 1; background: linear-gradient(#9a9a9a, #868686); }
.navbar i, .workarea i { width: 6px; background: #b8890c; border: 1px solid #4a3600; }
.ruler { position: relative; flex: none; height: 15px; margin: 0 6px; }
.tick { position: absolute; bottom: 0; width: 1px; height: 4px; background: #c9c9c9; }
.tick span { position: absolute; bottom: 4px; left: 0; transform: translateX(-50%); color: #c5c5c5; white-space: nowrap; -webkit-text-stroke: 0; }
.workarea { height: 15px; }
.cache { height: 3px; margin-left: 6px; background: #4c4c4c; flex: none; }
.cache i { display: block; width: 4px; height: 2px; background: #18c22c; }
.layerbar { flex: none; height: 14px; padding: 0 6px; background: #686868; border-top: 1px solid #222; }
.layerbar span { display: block; height: 13px; background: linear-gradient(#c66a6a, #ad4a4a); border: 1px solid #8e3c3c; border-top-color: #d07e7e; }
.tracks { flex: 1; margin: 0 6px 0 7px; background: #656565; }
.playhead { position: absolute; left: 6px; top: 3px; bottom: 0; width: 1px; background: #d01f1f; }
.playhead svg { position: absolute; top: 10px; left: -4px; width: 10px; height: 14px; }
.gutter { border-left: 1px solid #2c2c2c; }
.g1 { height: 45px; flex: none; display: flex; align-items: flex-end; justify-content: center; padding-bottom: 3px; border-bottom: 1px solid #2b2b2b; }
.g2 { height: 15px; flex: none; display: flex; align-items: center; justify-content: center; border-bottom: 1px solid #2b2b2b; }
.tv { flex: 1; width: auto; border: 0; padding: 4px 0; }
.tlfoot { display: flex; align-items: center; flex: none; height: 14px; border-top: 1px solid #3a3a3a; }
.fleft { display: flex; width: 443px; gap: 3px; padding-left: 4px; align-items: center; }
.toggle { margin-left: auto; margin-right: 110px; height: 12px; width: 111px; border: 1px solid #2a2a2a; background: linear-gradient(#6c6c6c, #565656); white-space: nowrap; }
.zoomer { display: flex; align-items: center; gap: 9px; width: 92px; padding: 0 6px; }
.zoomer .small { width: 8px; height: 8px; }
.zoomer input { appearance: none; flex: 1; min-width: 0; height: 3px; background: #1e1e1e; border-bottom: 1px solid #777; }
.zoomer input::-webkit-slider-thumb { appearance: none; width: 6px; height: 8px; background: #777; border: 1px solid #1e1e1e; border-radius: 3px 3px 0 0; }
.tlh { display: flex; align-items: center; flex: 1; height: 13px; padding: 0 5px; background: #505050; border-left: 1px solid #2b2b2b; }
.tlh .lf { border-right-color: #858585; } .tlh .rt2 { border-left-color: #858585; }
.resize { width: 15px; height: 13px; border-left: 1px solid #2b2b2b; background: repeating-linear-gradient(135deg, #595959 0 2px, #444 2px 3px); }
</style>
